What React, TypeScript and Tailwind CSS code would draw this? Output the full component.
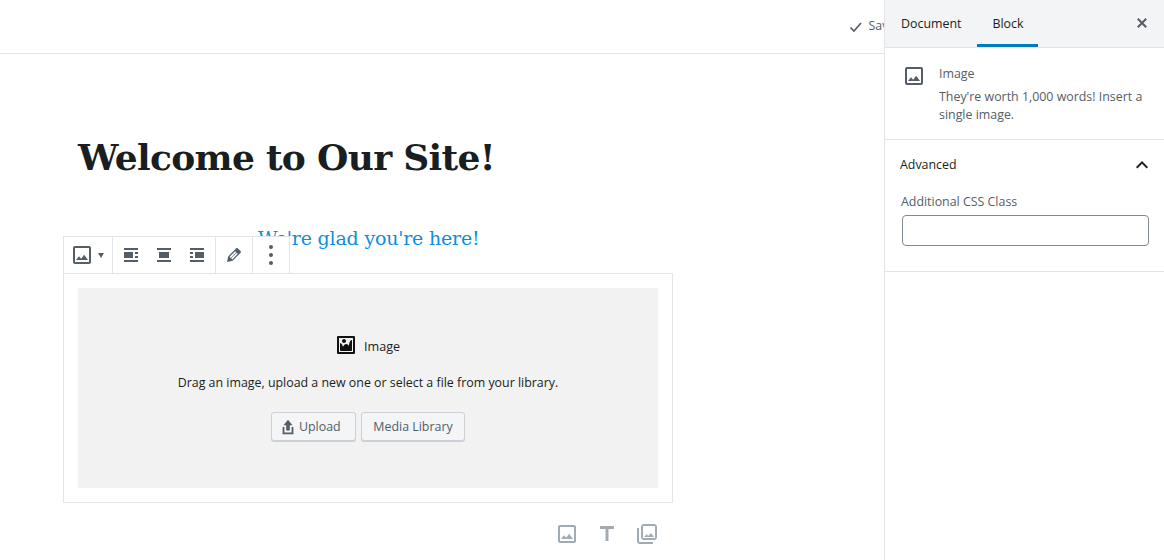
const ImageIcon = ({ className }: { className: string }) => (
  <svg viewBox="0 0 24 24" className={className} fill="currentColor">
    <path d="m19 5v14h-14v-14h14m0-2h-14c-1.1 0-2 0.9-2 2v14c0 1.1 0.9 2 2 2h14c1.1 0 2-0.9 2-2v-14c0-1.1-0.9-2-2-2z" />
    <path d="m14.14 11.86l-3 3.87-2.14-2.59-3 3.86h12l-3.86-5.14z" />
  </svg>
)

const AlignIcon = ({ d }: { d: string }) => (
  <svg viewBox="0 0 20 20" className="h-5 w-5 text-[#555d66]" fill="currentColor">
    <path d={d} />
  </svg>
)

function Toolbar() {
  return (
    <div className="absolute left-[-1px] top-[-38px] flex h-[38px] border border-[#e2e4e7] bg-white text-[#555d66]">
      <div className="flex w-[49px] items-center border-r border-[#e2e4e7] pl-[6px]">
        <ImageIcon className="h-6 w-6" />
        <span className="ml-[4px] h-0 w-0 border-x-[3px] border-t-[5px] border-x-transparent border-t-[#555d66]" />
      </div>
      <div className="flex w-[103px] items-center gap-[13px] border-r border-[#e2e4e7] pl-[8px]">
        <AlignIcon d="M3 5h14V3H3v2zm9 8V7H3v6h9zm2-4h3V7h-3v2zm0 4h3v-2h-3v2zM3 17h14v-2H3v2z" />
        <AlignIcon d="M3 5h14V3H3v2zm12 8V7H5v6h10zM3 17h14v-2H3v2z" />
        <AlignIcon d="M3 5h14V3H3v2zm0 4h3V7H3v2zm14 4V7H8v6h9zM3 13h3v-2H3v2zm0 4h14v-2H3v2z" />
      </div>
      <div className="flex w-[37px] items-center justify-center border-r border-[#e2e4e7]">
        <svg viewBox="0 0 20 20" className="h-5 w-5" fill="currentColor">
          <path d="M13.89 3.39l2.71 2.72c.46.46.42 1.24.03 1.64l-8.01 8.02-5.56 1.16 1.16-5.58s7.6-7.63 7.99-8.03c.39-.39 1.22-.39 1.68.07zm-2.73 2.79l-5.59 5.61 1.11 1.11 5.54-5.65zm-2.97 8.23l5.58-5.6-1.07-1.08-5.59 5.6z" />
        </svg>
      </div>
      <div className="flex w-[36px] flex-col items-center justify-center gap-[4px]">
        <span className="h-[4px] w-[4px] rounded-full bg-[#555d66]" />
        <span className="h-[4px] w-[4px] rounded-full bg-[#555d66]" />
        <span className="h-[4px] w-[4px] rounded-full bg-[#555d66]" />
      </div>
    </div>
  )
}

function ImageBlock() {
  return (
    <div className="relative ml-[63px] w-[610px] border border-[#e2e4e7] p-[14px]">
      <Toolbar />
      <div className="flex h-[200px] flex-col items-center bg-[#f2f2f2] pt-[45px] text-[12.4px] text-[#191e23]">
        <div className="flex h-6 items-center">
          <svg viewBox="0 0 20 20" className="h-5 w-5 text-[#111]" fill="currentColor">
            <path d="M2.25 1h15.5c.69 0 1.25.56 1.25 1.25v15.5c0 .69-.56 1.25-1.25 1.25H2.25C1.56 19 1 18.44 1 17.75V2.25C1 1.56 1.56 1 2.25 1zM17 17V3H3v14h14zM10 6c0-1.1-.9-2-2-2s-2 .9-2 2 .9 2 2 2 2-.9 2-2zm3 5s0-6 3-6v10c0 .55-.45 1-1 1H5c-.55 0-1-.45-1-1V8c2 0 3 4 3 4s1-3 3-3 3 2 3 2z" />
          </svg>
          <span className="ml-[8px] mt-[5px] text-[12.6px]">Image</span>
        </div>
        <p className="mt-[17px] h-[18px] leading-[18px]">
          Drag an image, upload a new one or select a file from your library.
        </p>
        <div className="mt-[20px] flex gap-[5px] text-[#555d66]">
          <button className="flex h-[29px] w-[85px] items-center rounded-[3px] border border-[#ccd0d4] bg-[#f3f5f6] pl-[7px] pt-[2px] shadow-[0_1px_0_#ccd0d4]">
            <svg viewBox="0 0 20 20" className="-mt-[2px] mr-[2px] h-[18px] w-[18px]" fill="currentColor">
              <path d="M8 14V8H5l5-6 5 6h-3v6H8zm-2 2v-6H4v8h12.01v-8H14v6H6z" />
            </svg>
            Upload
          </button>
          <button className="h-[29px] w-[104px] rounded-[3px] border border-[#ccd0d4] bg-[#f3f5f6] pt-[2px] shadow-[0_1px_0_#ccd0d4]">
            Media Library
          </button>
        </div>
      </div>
    </div>
  )
}

function Inserters() {
  return (
    <div className="ml-[555px] mt-[19px] flex gap-[16px] text-[#a2aab2]">
      <ImageIcon className="h-6 w-6" />
      <svg viewBox="0 0 24 24" className="h-6 w-6" fill="currentColor">
        <path d="M5 4v3h5.5v12h3V7H19V4z" />
      </svg>
      <svg viewBox="0 0 24 24" className="h-6 w-6" fill="currentColor">
        <path d="M20 4v12H8V4h12m0-2H8L6 4v12l2 2h12l2-2V4l-2-2z" />
        <path d="m12 12l1 2 3-3 3 4H9z" />
        <path d="m2 6v14l2 2h14v-2H4V6H2z" />
      </svg>
    </div>
  )
}

function Sidebar() {
  return (
    <aside className="relative w-[280px] shrink-0 border-l border-[#e2e4e7] bg-white text-[12.4px] text-[#191e23]">
      <div className="flex h-[48px] items-stretch border-b border-[#e2e4e7] bg-[#f3f4f5] pl-[16px]">
        <span className="flex items-center pt-[1px]">Document</span>
        <span className="ml-[16px] flex w-[61px] items-center justify-center border-b-[3px] border-[#007cba] pt-[4px]">
          Block
        </span>
        <svg viewBox="0 0 20 20" className="ml-auto mr-[12px] mt-[13px] h-5 w-5 text-[#555d66]" fill="currentColor">
          <path d="M14.95 6.46L11.41 10l3.54 3.54-1.41 1.41L10 11.42l-3.53 3.53-1.42-1.42L8.58 10 5.05 6.47l1.42-1.42L10 8.58l3.54-3.53z" />
        </svg>
      </div>
      <div className="flex h-[92px] border-b border-[#e2e4e7] pl-[17px] pt-[16px] text-[#555d66]">
        <ImageIcon className="h-6 w-6" />
        <div className="ml-[13px] w-[210px] leading-[18px]">
          <div className="mb-[5px] mt-[1px]">Image</div>
          <p className="mt-[5px]">They're worth 1,000 words! Insert a single image.</p>
        </div>
      </div>
      <div className="h-[132px] border-b border-[#e2e4e7] pl-[15px] pr-[16px]">
        <div className="flex h-[50px] items-center justify-between font-medium">
          Advanced
          <svg viewBox="0 0 24 24" className="h-6 w-6 -mr-[6px]" fill="currentColor">
            <path d="M7.41 15.41L12 10.83l4.59 4.58L18 14l-6-6-6 6z" />
          </svg>
        </div>
        <label className="mt-[2px] block pl-[1px] leading-[20px] text-[#555d66]">Additional CSS Class</label>
        <input className="ml-[2px] mt-[3px] block h-[31px] w-[247px] rounded-[4px] border border-[#7e8993] bg-white" />
      </div>
    </aside>
  )
}

export default function App() {
  return (
    <div className="flex h-[560px] w-[1164px] overflow-hidden bg-white font-['Open_Sans','Noto_Sans',sans-serif]">
      <main className="min-w-0 flex-1 overflow-hidden">
        <header className="flex h-[54px] items-center justify-end border-b border-[#e2e4e7] text-[12.4px] text-[#555d66]">
          <svg viewBox="0 0 14 14" className="h-[14px] w-[14px] shrink-0" fill="none" stroke="currentColor" strokeWidth="1.7">
            <path d="M1.5 7.5L5 11l7-8" />
          </svg>
          <span className="ml-[6px] -mr-[19px] shrink-0">Saved</span>
        </header>
        <h1 className="ml-[78px] mt-[76px] h-[54px] font-['DejaVu_Serif',serif] text-[36px] font-bold leading-[54px] tracking-[-0.7px] text-[#191e23]">
          Welcome to Our Site!
        </h1>
        <p className="ml-[258px] mt-[40px] font-['DejaVu_Serif',serif] text-[19px] leading-[28px] tracking-[-0.2px] text-[#0e8de0]">
          We're glad you're here!
        </p>
        <div className="mt-[21px]">
          <ImageBlock />
        </div>
        <Inserters />
      </main>
      <Sidebar />
    </div>
  )
}
